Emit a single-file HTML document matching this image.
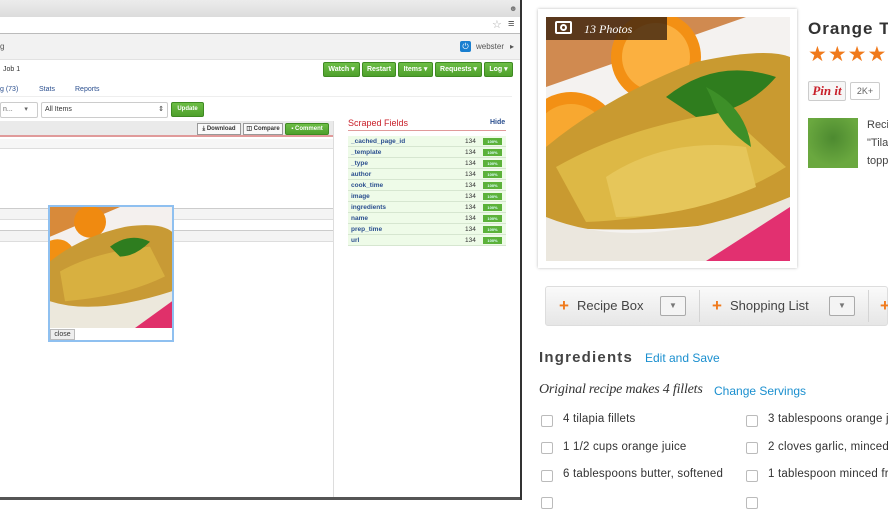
<!DOCTYPE html>
<html><head><meta charset="utf-8"><style>
*{margin:0;padding:0;box-sizing:border-box}
body{width:888px;height:500px;overflow:hidden;background:#fff;font-family:"Liberation Sans",sans-serif;position:relative}
.a{position:absolute}
.g{background:linear-gradient(#6cbd45,#4fa02c);color:#fff;border:1px solid #3f8a22;border-radius:2px;font-size:7px;font-weight:bold;text-align:center;line-height:13px}
.sf{position:absolute;left:348px;width:158px;height:11px;background:#eefbe8;border-bottom:1px solid #d6e6d0;font-size:6.5px;font-weight:bold;color:#2b4f8f;line-height:11px;padding-left:3px}
.sf b{position:absolute;left:117px;color:#333;font-weight:normal}
.sf i{position:absolute;left:135px;top:2px;width:19px;height:7px;background:#5cb23a;font-size:4px;color:#dff;line-height:7px;text-align:center;font-style:normal}
.cb{position:absolute;width:12px;height:12px;border:1px solid #bbb;border-radius:2px}
.ing{position:absolute;font-size:11.5px;color:#333;letter-spacing:.2px}
</style></head><body>
<div class="a" style="left:0;top:0;width:521px;height:17px;background:linear-gradient(#ececec,#dcdcdc)"></div>
<div class="a" style="left:509px;top:4px;font-size:8px;color:#777">&#9787;</div>
<div class="a" style="left:0;top:17px;width:521px;height:17px;background:#fff;border-bottom:1px solid #bbb"></div>
<div class="a" style="left:492px;top:18px;font-size:11px;color:#aaa">☆</div>
<div class="a" style="left:508px;top:18px;font-size:11px;color:#444">≡</div>
<div class="a" style="left:0;top:34px;width:521px;height:26px;background:#f2f2f2;border-bottom:1px solid #e2e2e2"></div>
<div class="a" style="left:0;top:42px;font-size:8px;color:#555">g</div>
<div class="a" style="left:460px;top:41px;width:11px;height:11px;background:#1a7fd0;border-radius:2px;color:#fff;font-size:8px;line-height:11px;text-align:center">⏻</div>
<div class="a" style="left:476px;top:42px;font-size:8px;color:#555">webster</div>
<div class="a" style="left:510px;top:42px;font-size:8px;color:#555">▸</div>
<div class="a" style="left:3px;top:66px;font-size:7px;color:#333">Job 1</div>
<div class="a g" style="left:323px;top:62px;width:37px;height:15px">Watch ▾</div>
<div class="a g" style="left:362px;top:62px;width:34px;height:15px">Restart</div>
<div class="a g" style="left:398px;top:62px;width:35px;height:15px">Items ▾</div>
<div class="a g" style="left:435px;top:62px;width:47px;height:15px">Requests ▾</div>
<div class="a g" style="left:484px;top:62px;width:29px;height:15px">Log ▾</div>
<div class="a" style="left:0;top:86px;font-size:7px;color:#2b4f8f">g (73)</div>
<div class="a" style="left:39px;top:86px;font-size:7px;color:#2b4f8f">Stats</div>
<div class="a" style="left:75px;top:86px;font-size:7px;color:#2b4f8f">Reports</div>
<div class="a" style="left:0;top:96px;width:512px;height:1px;background:#eee"></div>
<div class="a" style="left:0;top:102px;width:38px;height:16px;border:1px solid #ccc;border-radius:2px;font-size:7px;color:#666;line-height:14px;padding-left:2px">n... &nbsp;&nbsp;&nbsp;&nbsp;&nbsp;▾</div>
<div class="a" style="left:41px;top:102px;width:127px;height:16px;border:1px solid #ccc;border-radius:2px;font-size:7px;color:#333;line-height:14px;padding-left:3px">All Items<span style="position:absolute;right:3px">⇕</span></div>
<div class="a g" style="left:171px;top:102px;width:33px;height:15px;font-size:6px">Update</div>
<div class="a" style="left:0;top:121px;width:333px;height:16px;background:#eaeaea;border-bottom:2px solid #e09a9a"></div>
<div class="a" style="left:197px;top:123px;width:44px;height:12px;background:#fafafa;border:1px solid #999;font-size:6px;line-height:10px;text-align:center;font-weight:bold;color:#333">⤓ Download</div>
<div class="a" style="left:243px;top:123px;width:40px;height:12px;background:#fafafa;border:1px solid #999;font-size:6px;line-height:10px;text-align:center;font-weight:bold;color:#333">◫ Compare</div>
<div class="a g" style="left:285px;top:123px;width:44px;height:12px;font-size:6px;line-height:10px">▪ Comment</div>
<div class="a" style="left:0;top:139px;width:333px;height:10px;background:#f6f6f6;border-bottom:1px solid #ddd"></div>
<div class="a" style="left:0;top:208px;width:333px;height:12px;background:#f4f4f4;border-top:1px solid #ccc;border-bottom:1px solid #ddd"></div>
<div class="a" style="left:0;top:230px;width:333px;height:12px;background:#f4f4f4;border-top:1px solid #ccc;border-bottom:1px solid #ddd"></div>
<div class="a" style="left:333px;top:121px;width:1px;height:377px;background:#ddd"></div>
<div class="a" style="left:348px;top:118px;font-size:9px;color:#c8202a">Scraped Fields</div>
<div class="a" style="left:490px;top:119px;font-size:7px;color:#2b4f8f;font-weight:bold">Hide</div>
<div class="a" style="left:348px;top:130px;width:158px;height:1px;background:#e09a9a"></div>
<div class="sf" style="top:136px">_cached_page_id<b>134</b><i>100%</i></div>
<div class="sf" style="top:147px">_template<b>134</b><i>100%</i></div>
<div class="sf" style="top:158px">_type<b>134</b><i>100%</i></div>
<div class="sf" style="top:169px">author<b>134</b><i>100%</i></div>
<div class="sf" style="top:180px">cook_time<b>134</b><i>100%</i></div>
<div class="sf" style="top:191px">image<b>134</b><i>100%</i></div>
<div class="sf" style="top:202px">ingredients<b>134</b><i>100%</i></div>
<div class="sf" style="top:213px">name<b>134</b><i>100%</i></div>
<div class="sf" style="top:224px">prep_time<b>134</b><i>100%</i></div>
<div class="sf" style="top:235px">url<b>134</b><i>100%</i></div>
<div class="a" style="left:48px;top:205px;width:126px;height:137px;background:#fff;border:2px solid #8fc0f0"></div>
<svg class="a" style="left:50px;top:207px" width="122" height="121" viewBox="0 0 244 244" preserveAspectRatio="none">
<rect width="244" height="244" fill="#f4f0ee"/><path d="M0 0H140L0 60Z" fill="#d88a3a"/><circle cx="80" cy="30" r="32" fill="#f08a10"/><circle cx="15" cy="100" r="35" fill="#f29012"/>
<path d="M0 110 Q60 60 150 40 Q220 30 244 50 V170 Q160 210 0 200Z" fill="#c89a35"/><path d="M20 130 Q90 90 200 80 L230 140 Q150 180 30 190Z" fill="#d8b040"/>
<path d="M0 190 Q90 220 244 170 V244 H0Z" fill="#ece8dc"/><path d="M170 244 L244 190 V244Z" fill="#e0306a"/><path d="M120 80 Q160 50 200 70 Q170 100 140 100Z" fill="#2e7d1f"/></svg>
<div class="a" style="left:50px;top:329px;width:25px;height:11px;background:#eee;border:1px solid #bbb;font-size:7px;line-height:9px;text-align:center;color:#333">close</div>
<div class="a" style="left:0;top:497px;width:521px;height:3px;background:#555"></div>
<div class="a" style="left:520px;top:0;width:2px;height:500px;background:#333"></div>
<div class="a" style="left:538px;top:9px;width:259px;height:259px;background:#fff;box-shadow:0 0 3px #bbb"></div>
<svg class="a" style="left:546px;top:17px" width="244" height="244" viewBox="0 0 244 244">
<rect width="244" height="244" fill="#f4f2f0"/><path d="M0 0H200L0 70Z" fill="#d08a50"/><circle cx="110" cy="40" r="45" fill="#f39014"/><circle cx="110" cy="40" r="34" fill="#fbb040"/>
<circle cx="25" cy="125" r="50" fill="#f39014"/><circle cx="25" cy="125" r="38" fill="#f8a830"/>
<path d="M0 130 Q60 80 150 45 Q220 30 244 40 V190 Q160 220 0 210Z" fill="#c99a30"/>
<path d="M10 150 Q80 110 180 95 L240 150 Q160 200 40 205Z" fill="#ddb845"/><path d="M60 160 Q120 120 200 130 L210 170 Q140 200 70 200Z" fill="#e6c65a"/>
<path d="M0 200 Q100 240 244 180 V244 H0Z" fill="#ebe7de"/><path d="M160 244 L244 190 V244Z" fill="#e23070"/>
<path d="M120 80 Q170 40 230 60 Q200 95 150 100Z" fill="#2f7d1e"/><path d="M160 70 Q200 90 205 130 Q175 110 165 80Z" fill="#3d8f28"/></svg>
<div class="a" style="left:546px;top:17px;width:121px;height:23px;background:rgba(60,35,15,.8)"></div>
<div class="a" style="left:555px;top:21px;width:17px;height:13px;border:2px solid #fff;border-radius:2px"></div>
<div class="a" style="left:560px;top:24px;width:7px;height:7px;border:2px solid #fff;border-radius:50%"></div>
<div class="a" style="left:584px;top:22px;font-family:'Liberation Serif',serif;font-style:italic;font-size:12px;color:#fff">13 Photos</div>
<div class="a" style="left:808px;top:19px;font-size:17px;font-weight:bold;color:#333;letter-spacing:1px;white-space:nowrap">Orange Ti</div>
<div class="a" style="left:808px;top:42px;font-size:21px;color:#f07a1c;letter-spacing:1px;white-space:nowrap">★★★★</div>
<div class="a" style="left:808px;top:81px;width:38px;height:20px;border:1px solid #ccc;border-radius:2px;background:#f6f6f6;font-family:'Liberation Serif',serif;font-style:italic;font-weight:bold;color:#c8202a;font-size:13px;line-height:18px;text-align:center">Pin it</div>
<div class="a" style="left:850px;top:82px;width:30px;height:18px;border:1px solid #ccc;border-radius:2px;font-size:9px;color:#666;line-height:16px;text-align:center">2K+</div>
<div class="a" style="left:808px;top:118px;width:50px;height:50px;background:radial-gradient(circle at 50% 40%,#4d8a30,#6aa83f 70%)"></div>
<div class="a" style="left:867px;top:116px;font-size:11px;color:#444;line-height:18px">Reci<br>"Tila<br>topp</div>
<div class="a" style="left:545px;top:286px;width:343px;height:40px;background:linear-gradient(#fafafa,#e6e6e6);border:1px solid #ddd;border-radius:3px"></div>
<div class="a" style="left:559px;top:296px;font-size:17px;color:#f07a1c;font-weight:bold">+</div>
<div class="a" style="left:577px;top:298px;font-size:13px;color:#444">Recipe Box</div>
<div class="a" style="left:660px;top:296px;width:26px;height:20px;border:1px solid #aaa;border-radius:2px;background:#f4f4f4;font-size:8px;color:#777;text-align:center;line-height:18px">▼</div>
<div class="a" style="left:699px;top:290px;width:1px;height:32px;background:#d4d4d4"></div>
<div class="a" style="left:712px;top:296px;font-size:17px;color:#f07a1c;font-weight:bold">+</div>
<div class="a" style="left:730px;top:298px;font-size:13px;color:#444">Shopping List</div>
<div class="a" style="left:829px;top:296px;width:26px;height:20px;border:1px solid #aaa;border-radius:2px;background:#f4f4f4;font-size:8px;color:#777;text-align:center;line-height:18px">▼</div>
<div class="a" style="left:868px;top:290px;width:1px;height:32px;background:#d4d4d4"></div>
<div class="a" style="left:880px;top:296px;font-size:17px;color:#f07a1c;font-weight:bold">+</div>
<div class="a" style="left:539px;top:349px;font-size:15px;font-weight:bold;color:#444;letter-spacing:1.2px">Ingredients</div>
<div class="a" style="left:645px;top:351px;font-size:12px;color:#1a8fcf">Edit and Save</div>
<div class="a" style="left:539px;top:382px;font-family:'Liberation Serif',serif;font-style:italic;font-size:14px;letter-spacing:-.2px;color:#333;white-space:nowrap">Original recipe makes 4 fillets</div>
<div class="a" style="left:714px;top:384px;font-size:12px;color:#1a8fcf">Change Servings</div>
<div class="cb" style="left:541px;top:415px"></div><div class="ing" style="left:563px;top:413px">4 tilapia fillets</div>
<div class="cb" style="left:746px;top:415px"></div><div class="ing" style="left:768px;top:413px;white-space:nowrap">3 tablespoons orange j</div>
<div class="cb" style="left:541px;top:442px"></div><div class="ing" style="left:563px;top:441px">1 1/2 cups orange juice</div>
<div class="cb" style="left:746px;top:442px"></div><div class="ing" style="left:768px;top:441px;white-space:nowrap">2 cloves garlic, minced</div>
<div class="cb" style="left:541px;top:470px"></div><div class="ing" style="left:563px;top:468px">6 tablespoons butter, softened</div>
<div class="cb" style="left:746px;top:470px"></div><div class="ing" style="left:768px;top:468px;white-space:nowrap">1 tablespoon minced fr</div>
<div class="cb" style="left:541px;top:497px"></div><div class="cb" style="left:746px;top:497px"></div>
</body></html>
